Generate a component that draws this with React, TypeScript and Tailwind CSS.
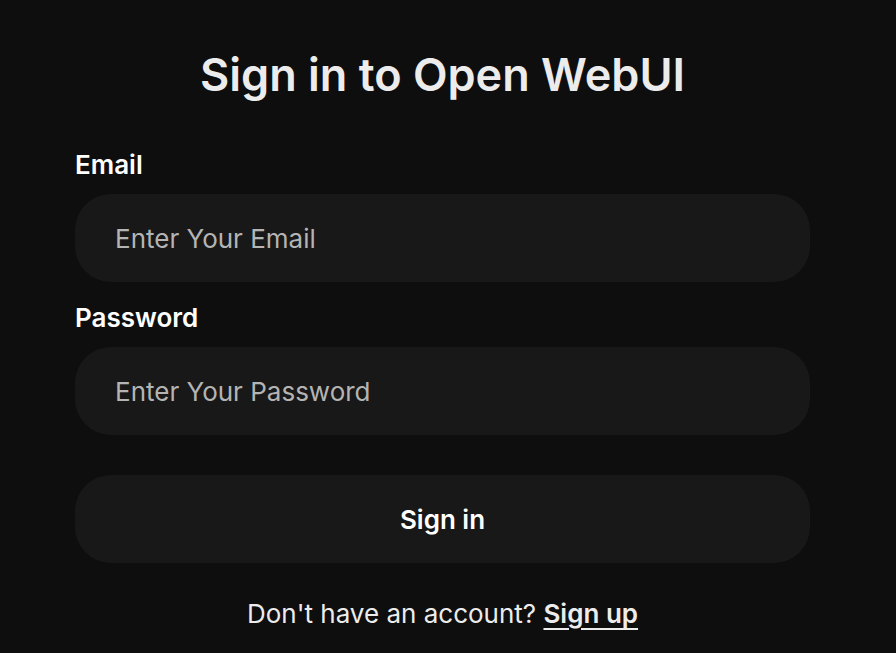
export default function App() {
  return (
    <div
      className="min-h-[653px] w-full bg-[#0e0e0e] text-[#ececec]"
      style={{ fontFamily: "Inter, 'Liberation Sans', sans-serif" }}
    >
      <div className="ml-[75px] w-[735px] pt-[47px]">
        <h1 className="text-center text-[45px] leading-[56px] font-semibold">
          Sign in to Open WebUI
        </h1>

        <form className="mt-[46px] flex flex-col">
          <div>
            <label className="block text-[26px] leading-[32px] font-semibold text-white">
              Email
            </label>
            <input
              type="email"
              placeholder="Enter Your Email"
              className="mt-[13px] w-full h-[88px] rounded-[36px] bg-[#181818] px-[40px] text-[26px] text-white placeholder:text-[#b4b4b4] outline-none"
            />
          </div>

          <div className="mt-[20px]">
            <label className="block text-[26px] leading-[32px] font-semibold text-white">
              Password
            </label>
            <input
              type="password"
              placeholder="Enter Your Password"
              className="mt-[13px] w-full h-[88px] rounded-[36px] bg-[#181818] px-[40px] text-[26px] text-white placeholder:text-[#b4b4b4] outline-none"
            />
          </div>

          <button
            type="button"
            className="mt-[40px] h-[88px] w-full rounded-[36px] bg-[#181818] text-[26px] font-semibold text-white"
          >
            Sign in
          </button>

          <div className="mt-[35px] text-center text-[26px] leading-[32px] text-[#ececec]">
            Don't have an account?{" "}
            <button type="button" className="font-semibold underline underline-offset-[5px]">
              Sign up
            </button>
          </div>
        </form>
      </div>
    </div>
  );
}
